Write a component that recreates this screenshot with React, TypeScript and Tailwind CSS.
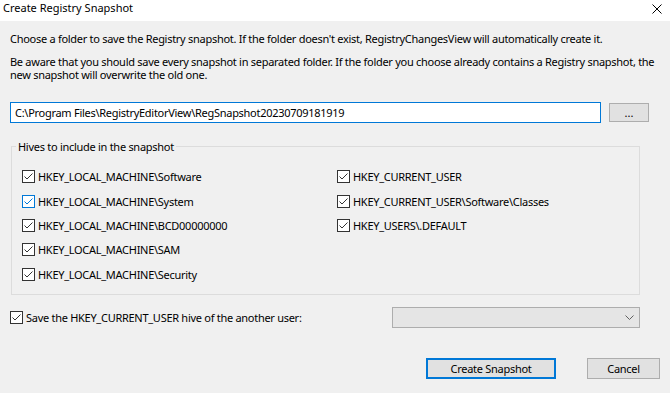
import React from "react";

function Check({ checked = true, focus = false }: { checked?: boolean; focus?: boolean }) {
  const c = focus ? "#0078d7" : "#333333";
  return (
    <span
      className={
        "w-[13px] h-[13px] shrink-0 bg-white border flex items-center justify-center " +
        (focus ? "border-[#0078d7]" : "border-[#333333]")
      }
    >
      {checked && (
        <svg width="11" height="11" viewBox="0 0 11 11">
          <path d="M1.5 5.5 L4 8 L9.5 2.5" fill="none" stroke={c} strokeWidth="1" />
        </svg>
      )}
    </span>
  );
}

function Row({ label, focus = false, cls = "" }: { label: string; focus?: boolean; cls?: string }) {
  return (
    <div className={"flex items-center h-[13px] gap-[3px] whitespace-nowrap " + cls}>
      <Check focus={focus} />
      <span>{label}</span>
    </div>
  );
}

export default function App() {
  return (
    <div className="w-[670px] h-[393px] bg-[#f0f0f0] flex flex-col text-[11px] leading-[13px] text-black font-['Noto_Sans',sans-serif] overflow-hidden">
      <div className="h-[21px] bg-white flex justify-between shrink-0">
        <div className="pl-[3px] pt-[1px] text-[11px] whitespace-nowrap">Create Registry Snapshot</div>
        <div className="pt-[4px] pr-[8px]">
          <svg width="10" height="10" viewBox="0 0 10 10">
            <path d="M0.5 0.5 L9.5 9.5 M9.5 0.5 L0.5 9.5" stroke="#000" strokeWidth="1" />
          </svg>
        </div>
      </div>
      <div className="flex flex-col px-[10px] tracking-[-0.28px]">
        <p className="mt-[11px] whitespace-nowrap">
          Choose a folder to save the Registry snapshot. If the folder doesn't exist, RegistryChangesView will automatically create it.
        </p>
        <p className="mt-[10px] whitespace-nowrap">
          Be aware that you should save every snapshot in separated folder. If the folder you choose already contains a Registry snapshot, the
          <br />
          new snapshot will overwrite the old one.
        </p>
        <div className="flex items-start mt-[21px]">
          <div className="w-[591px] h-[21px] bg-white border border-[#0078d7] flex items-center pl-[4px] whitespace-nowrap">
            C:\Program Files\RegistryEditorView\RegSnapshot20230709181919
          </div>
          <button className="ml-[8px] mt-[1px] w-[40px] h-[19px] bg-[#e1e1e1] border border-[#adadad] flex items-center justify-center leading-none tracking-normal">
            ...
          </button>
        </div>
        <fieldset className="ml-[1px] w-[629px] h-[155px] border border-[#dcdcdc] mt-[17px]">
          <legend className="ml-[4px] px-[2px] leading-[13px]">Hives to include in the snapshot</legend>
          <div className="grid grid-cols-[315px_1fr] pl-[10px] pt-[17px]">
            <div className="flex flex-col">
              <Row label="HKEY_LOCAL_MACHINE\Software" />
              <Row label="HKEY_LOCAL_MACHINE\System" focus cls="mt-[12px]" />
              <Row label="HKEY_LOCAL_MACHINE\BCD00000000" cls="mt-[11px]" />
              <Row label="HKEY_LOCAL_MACHINE\SAM" cls="mt-[11px]" />
              <Row label="HKEY_LOCAL_MACHINE\Security" cls="mt-[12px]" />
            </div>
            <div className="flex flex-col">
              <Row label="HKEY_CURRENT_USER" />
              <Row label="HKEY_CURRENT_USER\Software\Classes" cls="mt-[12px]" />
              <Row label="HKEY_USERS\.DEFAULT" cls="mt-[11px]" />
            </div>
          </div>
        </fieldset>
        <div className="flex items-center mt-[12px]">
          <Row label="Save the HKEY_CURRENT_USER hive of the another user:" />
          <div className="ml-auto mr-[20px] w-[248px] h-[21px] bg-[#e5e5e5] border border-[#adadad] flex items-center justify-end pr-[5px]">
            <svg width="9" height="5" viewBox="0 0 9 5">
              <path d="M0.5 0.5 L4.5 4.5 L8.5 0.5" fill="none" stroke="#606060" strokeWidth="1" />
            </svg>
          </div>
        </div>
        <div className="flex justify-end mt-[30px] gap-[31px]">
          <button className="w-[130px] h-[21px] bg-[#e1e1e1] border-2 border-[#0078d7] flex items-center justify-center">
            Create Snapshot
          </button>
          <button className="w-[73px] h-[21px] bg-[#e1e1e1] border border-[#adadad] flex items-center justify-center">
            Cancel
          </button>
        </div>
      </div>
    </div>
  );
}
